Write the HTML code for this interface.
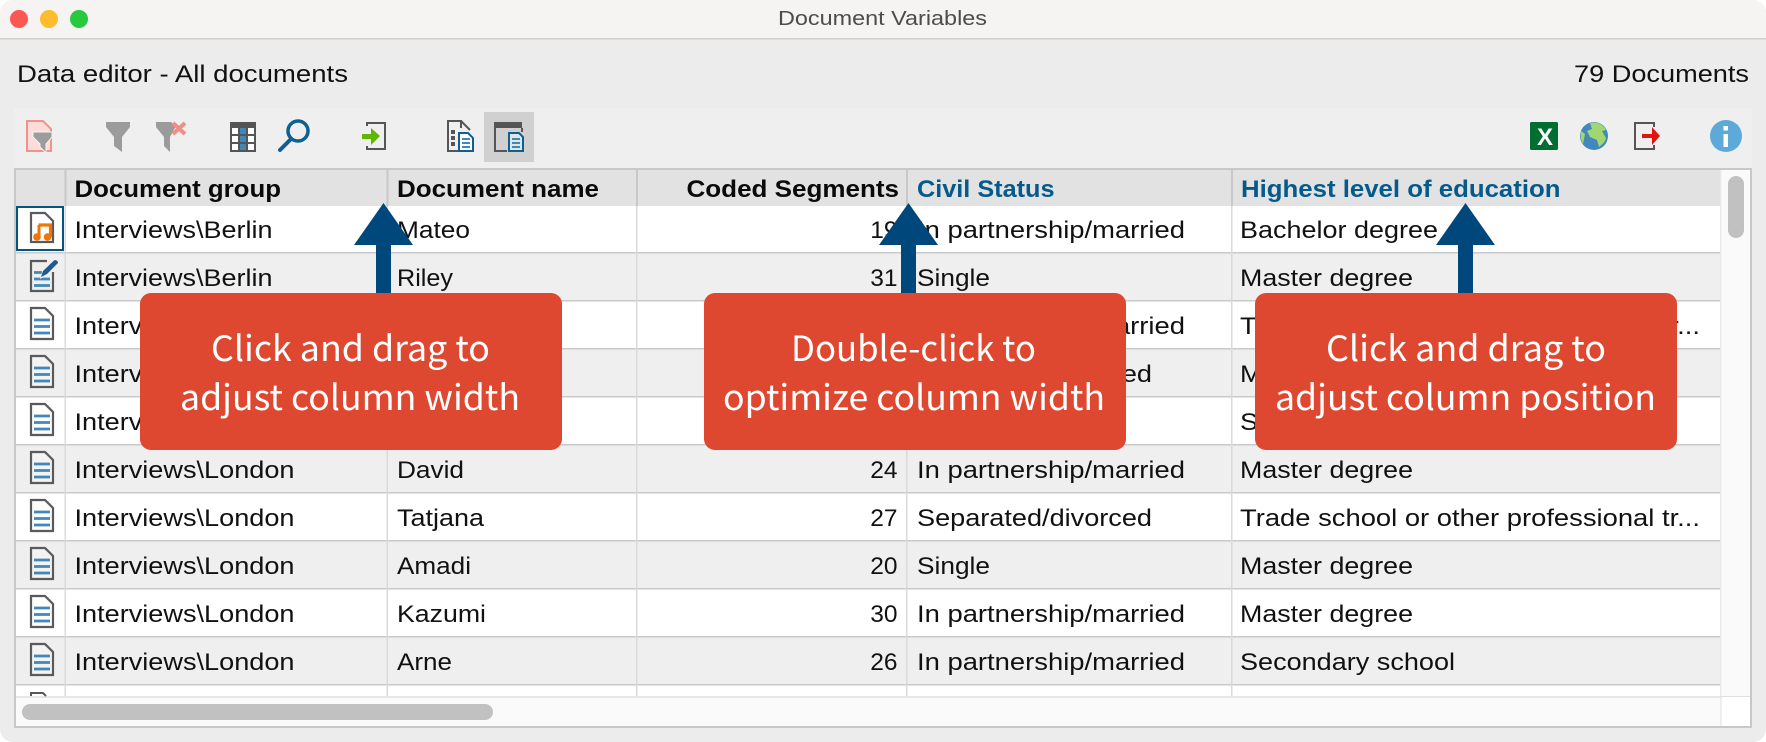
<!DOCTYPE html>
<html><head><meta charset="utf-8"><title>Document Variables</title>
<style>
html,body{margin:0;padding:0;background:#fff;width:1766px;height:742px;overflow:hidden}
svg{display:block}
text{font-family:"Liberation Sans",sans-serif;font-size:24.5px;fill:#111}
.h{font-weight:bold;font-size:24px;fill:#0a0a0a}
.b{font-weight:bold;font-size:24px;fill:#055a8c}
.c{font-family:"Noto Sans CJK SC","Liberation Sans",sans-serif;font-size:35px;font-weight:400;fill:#fff}
</style></head><body>
<svg width="1766" height="742" viewBox="0 0 1766 742" xmlns="http://www.w3.org/2000/svg">
<defs>
<symbol id="doc" width="26" height="34" viewBox="0 0 26 34" overflow="visible">
<path d="M2 1H16L24 9V32H2Z" fill="#fafafa" fill-opacity=".4" stroke="#5a5a5a" stroke-width="2.200"/>
<path d="M5 13H21M5 19.500H21M5 26H21" stroke="#3f88b8" stroke-width="2.800" fill="none"/>
</symbol>
</defs>
<rect x="0" y="0" width="1766" height="742" rx="13" fill="#ececec"/>
<path d="M0 38V13A13 13 0 0 1 13 0H1753A13 13 0 0 1 1766 13V38Z" fill="#f5f4f2"/>
<rect x="0" y="38" width="1766" height="1.500" fill="#cfcfcf"/>
<circle cx="19" cy="19" r="9" fill="#fc5753"/><circle cx="49" cy="19" r="9" fill="#fdbc2e"/><circle cx="79" cy="19" r="9" fill="#28c840"/>
<text x="778" y="25" textLength="209" lengthAdjust="spacingAndGlyphs" style="font-size:20px;fill:#4c4c4c">Document Variables</text>
<text x="17" y="82" textLength="331" lengthAdjust="spacingAndGlyphs">Data editor - All documents</text>
<text x="1574" y="82" textLength="175" lengthAdjust="spacingAndGlyphs">79 Documents</text>

<rect x="14" y="108" width="1738" height="60" fill="#efefef"/>
<rect x="484" y="112" width="50" height="50" fill="#d0d0d0"/>

<!-- toolbar icons -->
<path d="M27 121H43L51 129V151H27Z" fill="#fbdcd9" stroke="#f2928a" stroke-width="2"/>
<path d="M33 132H52V137L46 144V152H45L40 147V144L33 137Z" fill="#9c9c9c" stroke="#f5f5f5" stroke-width="1"/>
<path d="M106 122H130V127L122 137V152L114 146V137L106 127Z" fill="#9b9b9b"/>
<path d="M156 122H171L176 126L170 137V152L164 146V137L156 127Z" fill="#9b9b9b"/>
<path d="M173 123L185 134M185 123L173 134" stroke="#ef8e86" stroke-width="4"/>
<rect x="230" y="122" width="26" height="30" fill="#555"/>
<g fill="#fff"><rect x="232" y="128" width="6" height="6"/><rect x="240" y="128" width="6" height="6" fill="#3f88b8"/><rect x="248" y="128" width="6" height="6"/><rect x="232" y="136" width="6" height="6"/><rect x="240" y="136" width="6" height="6" fill="#3f88b8"/><rect x="248" y="136" width="6" height="6"/><rect x="232" y="144" width="6" height="6"/><rect x="240" y="144" width="6" height="6" fill="#3f88b8"/><rect x="248" y="144" width="6" height="6"/></g>
<circle cx="298" cy="131" r="10" fill="none" stroke="#0f5f92" stroke-width="3.500"/>
<path d="M291 139L280 150" stroke="#0f5f92" stroke-width="4" stroke-linecap="round"/>
<path d="M367 126V123H385V149H367V146" fill="none" stroke="#555" stroke-width="2"/>
<path d="M362 134H371V128L380 136L371 145V139H362Z" fill="#5fb800"/>
<path d="M461 128V121H448V151H461M461 121L470 130" fill="none" stroke="#555" stroke-width="2"/>
<path d="M451 130h4v4h-4ZM451 136h4v4h-4ZM451 142h4v4h-4Z" fill="#555"/>
<path d="M459 133H468L473 138V151H459Z" fill="#fff" stroke="#0f5f92" stroke-width="2"/>
<path d="M462 139H470M462 143H470M462 147H470" stroke="#3f88b8" stroke-width="2"/>
<rect x="494" y="122" width="28" height="6" fill="#555"/>
<path d="M495 128V151H507M522 128V132" fill="none" stroke="#555" stroke-width="2"/>
<path d="M509 133H519L523 137V151H509Z" fill="#dfe6ea" stroke="#0f5f92" stroke-width="2"/>
<path d="M512 139H520M512 143H520M512 147H520" stroke="#3f88b8" stroke-width="2"/>
<rect x="1530" y="122" width="28" height="28" rx="1.500" fill="#006e33"/>
<text x="1537" y="145" style="font-size:24px;font-weight:bold;fill:#fff">X</text>
<circle cx="1594" cy="136" r="14" fill="#4189bd"/>
<path d="M1590 123C1597 121 1604 125 1606 130L1602 131L1606 138C1605 143 1601 145 1599 147L1597 140L1590 137L1587 131L1592 129ZM1581 131L1585 134L1583 144C1581 141 1580 135 1581 131Z" fill="#a3d672"/>
<path d="M1654 127V123H1635V149H1654V145" fill="none" stroke="#555" stroke-width="2"/>
<path d="M1642 134H1652V127L1660 136L1652 145V138H1642Z" fill="#e2140f"/>
<circle cx="1726" cy="136" r="16" fill="#5da9d9"/>
<rect x="1723.500" y="134" width="4.500" height="13" fill="#fff"/><rect x="1723.500" y="126" width="4.500" height="4.500" fill="#fff"/>

<!-- table -->
<rect x="15" y="169" width="1736" height="558" fill="#fff" stroke="#c8c8c8" stroke-width="2"/>
<rect x="16" y="170" width="1704" height="36" fill="#e2e2e2"/>
<rect x="1720" y="170" width="30" height="526" fill="#fafafa"/>
<rect x="1720" y="170" width="1.500" height="526" fill="#ebebeb"/>
<rect x="1728" y="176" width="16" height="62" rx="8" fill="#c1c1c1"/>
<g fill="#efefef">
<rect x="16" y="253" width="1704" height="47"/><rect x="16" y="349" width="1704" height="47"/><rect x="16" y="445" width="1704" height="47"/><rect x="16" y="541" width="1704" height="47"/><rect x="16" y="637" width="1704" height="47"/>
</g>
<g fill="#cacaca">
<rect x="16" y="252" width="1704" height="1.500"/><rect x="16" y="300" width="1704" height="1.500"/><rect x="16" y="348" width="1704" height="1.500"/><rect x="16" y="396" width="1704" height="1.500"/><rect x="16" y="444" width="1704" height="1.500"/><rect x="16" y="492" width="1704" height="1.500"/><rect x="16" y="540" width="1704" height="1.500"/><rect x="16" y="588" width="1704" height="1.500"/><rect x="16" y="636" width="1704" height="1.500"/><rect x="16" y="684" width="1704" height="1.500"/>
</g>
<g fill="#dadada">
<rect x="64.500" y="206" width="1.500" height="490"/><rect x="386.500" y="206" width="1.500" height="490"/><rect x="636" y="206" width="1.500" height="490"/><rect x="906" y="206" width="1.500" height="490"/><rect x="1231" y="206" width="1.500" height="490"/>
</g>
<g fill="#c8c8c8">
<rect x="64.500" y="170" width="2" height="36"/><rect x="386.500" y="170" width="2" height="36"/><rect x="636" y="170" width="2" height="36"/><rect x="906" y="170" width="2" height="36"/><rect x="1231" y="170" width="2" height="36"/>
</g>
<!-- hscroll -->
<rect x="16" y="696" width="1705" height="30" fill="#fafafa"/>
<rect x="16" y="696" width="1705" height="2" fill="#e6e6e6"/>
<rect x="1720.500" y="696" width="1" height="30" fill="#e0e0e0"/>
<rect x="1722" y="696" width="28" height="30" fill="#fff"/>
<rect x="1720" y="696" width="30" height="1" fill="#e0e0e0"/>
<rect x="22" y="704" width="471" height="16" rx="8" fill="#c1c1c1"/>

<!-- header text -->
<text class="h" x="74.500" y="197" textLength="206.500" lengthAdjust="spacingAndGlyphs">Document group</text>
<text class="h" x="397" y="197" textLength="202" lengthAdjust="spacingAndGlyphs">Document name</text>
<text class="h" x="686.500" y="197" textLength="212.500" lengthAdjust="spacingAndGlyphs">Coded Segments</text>
<text class="b" x="917" y="197" textLength="137.500" lengthAdjust="spacingAndGlyphs">Civil Status</text>
<text class="b" x="1241" y="197" textLength="319.500" lengthAdjust="spacingAndGlyphs">Highest level of education</text>

<!-- row header icons -->
<rect x="17" y="207" width="46" height="43" fill="#fff" stroke="#05557f" stroke-width="2"/>
<path d="M31 213H45L53 221V242H31Z" fill="none" stroke="#5a5a5a" stroke-width="2.200"/>
<path d="M38.500 225H50.500V237" fill="none" stroke="#f27405" stroke-width="3.200"/><path d="M39 225V237" stroke="#f27405" stroke-width="3"/>
<circle cx="37" cy="237" r="3.800" fill="#f27405"/><circle cx="47.500" cy="237" r="3.800" fill="#f27405"/>
<path d="M47 261H31V291H53V272" fill="none" stroke="#5a5a5a" stroke-width="2.200"/>
<path d="M34 272.500H42M34 279H50M34 285.500H50" stroke="#3f88b8" stroke-width="2.800"/>
<path d="M44 277L40 279L42 272L54 261L58 261L58 265Z" fill="#e8eef3"/>
<path d="M41 277L43 271L54 260.500C56 259.500 58 261 58 263L47 274Z" fill="#21598c"/>
<use href="#doc" x="29" y="307"/><use href="#doc" x="29" y="355"/><use href="#doc" x="29" y="403"/><use href="#doc" x="29" y="451"/><use href="#doc" x="29" y="499"/><use href="#doc" x="29" y="547"/><use href="#doc" x="29" y="595"/><use href="#doc" x="29" y="643"/>
<path d="M31 696V693H43L46 696" fill="none" stroke="#5a5a5a" stroke-width="2"/>

<!-- rows -->
<text x="74.500" y="238" textLength="198" lengthAdjust="spacingAndGlyphs">Interviews\Berlin</text><text x="397" y="238" textLength="73" lengthAdjust="spacingAndGlyphs">Mateo</text><text x="897.500" y="238" text-anchor="end">19</text><text x="917" y="238" textLength="268" lengthAdjust="spacingAndGlyphs">In partnership/married</text><text x="1240" y="238" textLength="198" lengthAdjust="spacingAndGlyphs">Bachelor degree</text>
<text x="74.500" y="286" textLength="198" lengthAdjust="spacingAndGlyphs">Interviews\Berlin</text><text x="397" y="286" textLength="56" lengthAdjust="spacingAndGlyphs">Riley</text><text x="897.500" y="286" text-anchor="end">31</text><text x="917" y="286" textLength="73" lengthAdjust="spacingAndGlyphs">Single</text><text x="1240" y="286" textLength="173" lengthAdjust="spacingAndGlyphs">Master degree</text>
<text x="74.500" y="334" textLength="220" lengthAdjust="spacingAndGlyphs">Interviews\London</text><text x="917" y="334" textLength="268" lengthAdjust="spacingAndGlyphs">In partnership/married</text><text x="1240" y="334" textLength="460" lengthAdjust="spacingAndGlyphs">Trade school or other professional tr...</text>
<text x="74.500" y="382" textLength="220" lengthAdjust="spacingAndGlyphs">Interviews\London</text><text x="917" y="382" textLength="235" lengthAdjust="spacingAndGlyphs">Separated/divorced</text><text x="1240" y="382" textLength="173" lengthAdjust="spacingAndGlyphs">Master degree</text>
<text x="74.500" y="430" textLength="220" lengthAdjust="spacingAndGlyphs">Interviews\London</text><text x="1240" y="430" textLength="215" lengthAdjust="spacingAndGlyphs">Secondary school</text>
<text x="74.500" y="478" textLength="220" lengthAdjust="spacingAndGlyphs">Interviews\London</text><text x="397" y="478" textLength="67" lengthAdjust="spacingAndGlyphs">David</text><text x="897.500" y="478" text-anchor="end">24</text><text x="917" y="478" textLength="268" lengthAdjust="spacingAndGlyphs">In partnership/married</text><text x="1240" y="478" textLength="173" lengthAdjust="spacingAndGlyphs">Master degree</text>
<text x="74.500" y="526" textLength="220" lengthAdjust="spacingAndGlyphs">Interviews\London</text><text x="397" y="526" textLength="87" lengthAdjust="spacingAndGlyphs">Tatjana</text><text x="897.500" y="526" text-anchor="end">27</text><text x="917" y="526" textLength="235" lengthAdjust="spacingAndGlyphs">Separated/divorced</text><text x="1240" y="526" textLength="460" lengthAdjust="spacingAndGlyphs">Trade school or other professional tr...</text>
<text x="74.500" y="574" textLength="220" lengthAdjust="spacingAndGlyphs">Interviews\London</text><text x="397" y="574" textLength="74" lengthAdjust="spacingAndGlyphs">Amadi</text><text x="897.500" y="574" text-anchor="end">20</text><text x="917" y="574" textLength="73" lengthAdjust="spacingAndGlyphs">Single</text><text x="1240" y="574" textLength="173" lengthAdjust="spacingAndGlyphs">Master degree</text>
<text x="74.500" y="622" textLength="220" lengthAdjust="spacingAndGlyphs">Interviews\London</text><text x="397" y="622" textLength="89" lengthAdjust="spacingAndGlyphs">Kazumi</text><text x="897.500" y="622" text-anchor="end">30</text><text x="917" y="622" textLength="268" lengthAdjust="spacingAndGlyphs">In partnership/married</text><text x="1240" y="622" textLength="173" lengthAdjust="spacingAndGlyphs">Master degree</text>
<text x="74.500" y="670" textLength="220" lengthAdjust="spacingAndGlyphs">Interviews\London</text><text x="397" y="670" textLength="55" lengthAdjust="spacingAndGlyphs">Arne</text><text x="897.500" y="670" text-anchor="end">26</text><text x="917" y="670" textLength="268" lengthAdjust="spacingAndGlyphs">In partnership/married</text><text x="1240" y="670" textLength="215" lengthAdjust="spacingAndGlyphs">Secondary school</text>

<!-- arrows -->
<g fill="#00477c">
<path d="M383.500 203L413 245H391V294H376V245H354Z"/>
<path d="M908.500 203L938 245H916V294H901V245H879Z"/>
<path d="M1465.500 203L1495 245H1473V294H1458V245H1436Z"/>
</g>
<!-- callouts -->
<g fill="#de4830">
<rect x="140" y="293" width="422" height="157" rx="11"/>
<rect x="704" y="293" width="422" height="157" rx="11"/>
<rect x="1255" y="293" width="422" height="157" rx="11"/>
</g>
<text class="c" x="211" y="361" textLength="279" lengthAdjust="spacingAndGlyphs">Click and drag to</text>
<text class="c" x="180" y="410" textLength="340" lengthAdjust="spacingAndGlyphs">adjust column width</text>
<text class="c" x="791" y="361" textLength="245" lengthAdjust="spacingAndGlyphs">Double-click to</text>
<text class="c" x="723" y="410" textLength="382" lengthAdjust="spacingAndGlyphs">optimize column width</text>
<text class="c" x="1326" y="361" textLength="280" lengthAdjust="spacingAndGlyphs">Click and drag to</text>
<text class="c" x="1275" y="410" textLength="381" lengthAdjust="spacingAndGlyphs">adjust column position</text>
</svg>
</body></html>
